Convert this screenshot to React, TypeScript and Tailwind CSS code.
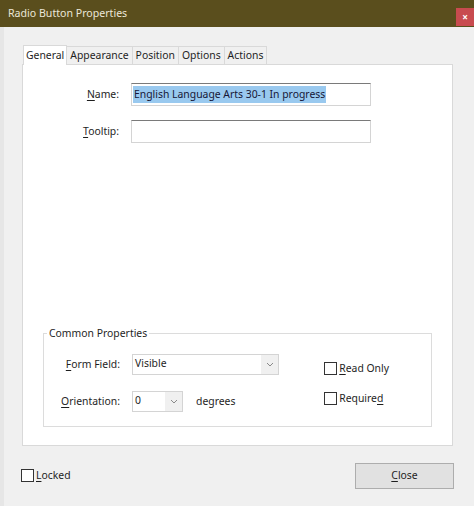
import React from "react";

const font = { fontFamily: '"Noto Sans", "Open Sans", sans-serif' };

function Key({ children }: { children: React.ReactNode }) {
  return <span className="underline underline-offset-2">{children}</span>;
}

function Chevron() {
  return (
    <svg width="8" height="5" viewBox="0 0 8 5" fill="none">
      <path d="M1 1L4 4L7 1" stroke="#8a8a8a" strokeWidth="1" />
    </svg>
  );
}

function Check({ label }: { label: React.ReactNode }) {
  return (
    <label className="flex items-center gap-[2px] text-[#1e1e1e]">
      <span className="w-[13px] h-[13px] border border-[#333] bg-white" />
      <span>{label}</span>
    </label>
  );
}

export default function App() {
  const tabs = ["Appearance", "Position", "Options", "Actions"];

  return (
    <div
      className="w-[474px] h-[506px] bg-[#f0f0f0] flex flex-col text-[10.4px] text-[#1e1e1e] overflow-hidden"
      style={font}
    >
      {/* title bar */}
      <div className="h-[27px] bg-[#5a4e1d] flex justify-between pl-[8px]">
        <span className="self-center text-[#ebe7d9] text-[10.6px]">Radio Button Properties</span>
        <button className="self-end w-[18px] h-[18px] mb-[1px] bg-[#c84b4f] text-white text-[10px] font-bold flex items-center justify-center">
          ×
        </button>
      </div>

      <div className="flex-1 flex flex-col border-l-[4px] border-[#e6e6e6]">
        {/* tabs */}
        <div className="mt-[18px] ml-[18px] flex items-end h-[19px]">
          <div className="h-[20px] px-[2px] bg-white border border-b-0 border-[#d9d9d9] ml-[1px] flex items-center relative top-[1px] z-10">
            General
          </div>
          {tabs.map((t) => (
            <div
              key={t}
              className="h-[18px] px-[3px] bg-[#f0f0f0] border border-l-0 border-b-0 border-[#d9d9d9] flex items-center"
            >
              {t}
            </div>
          ))}
        </div>

        {/* panel */}
        <div className="ml-[18px] w-[431px] h-[382px] bg-white border border-[#d9d9d9] flex flex-col">
          <div className="mt-[18px] flex items-center">
            <span className="w-[96px] text-right">
              <Key>N</Key>ame:
            </span>
            <div className="ml-[12px] w-[240px] h-[23px] border border-[#d4d4d4] border-t-[#7a7a7a] flex items-center px-[1px]">
              <span className="bg-[#99c9ef] text-[#161636] leading-[17px] px-[1px]">
                English Language Arts 30-1 In progress
              </span>
            </div>
          </div>
          <div className="mt-[14px] flex items-center">
            <span className="w-[96px] text-right">
              <Key>T</Key>ooltip:
            </span>
            <div className="ml-[12px] w-[240px] h-[23px] border border-[#d4d4d4] border-t-[#7a7a7a]" />
          </div>

          <fieldset className="mt-auto mb-[18px] ml-[20px] w-[389px] h-[101px] border border-[#dcdcdc] flex">
            <legend className="ml-[3px] px-[2px] leading-[14px]">Common Properties</legend>
            <div className="flex flex-col">
              <div className="mt-[14px] flex items-center">
                <span className="w-[76px] text-right">
                  <Key>F</Key>orm Field:
                </span>
                <div className="ml-[12px] w-[147px] h-[21px] border border-[#d4d4d4] flex">
                  <span className="flex-1 bg-white pl-[2px] leading-[17px]">Visible</span>
                  <span className="w-[17px] bg-[#f0f0f0] flex items-center justify-center">
                    <Chevron />
                  </span>
                </div>
              </div>
              <div className="mt-[16px] flex items-center">
                <span className="w-[76px] text-right">
                  <Key>O</Key>rientation:
                </span>
                <div className="ml-[12px] w-[51px] h-[21px] border border-[#d4d4d4] flex">
                  <span className="flex-1 bg-white pl-[2px] leading-[17px]">0</span>
                  <span className="w-[17px] bg-[#f0f0f0] flex items-center justify-center">
                    <Chevron />
                  </span>
                </div>
                <span className="ml-[13px]">degrees</span>
              </div>
            </div>
            <div className="ml-auto mr-[42px] flex flex-col">
              <div className="mt-[21px]">
                <Check
                  label={
                    <>
                      <Key>R</Key>ead Only
                    </>
                  }
                />
              </div>
              <div className="mt-[14px]">
                <Check
                  label={
                    <>
                      Require<Key>d</Key>
                    </>
                  }
                />
              </div>
            </div>
          </fieldset>
        </div>

        {/* footer */}
        <div className="flex items-center justify-between pl-[17px] pr-[20px] mt-[17px]">
          <Check
            label={
              <>
                <Key>L</Key>ocked
              </>
            }
          />
          <button className="w-[99px] h-[26px] bg-[#e1e1e1] border border-[#adadad]">
            <Key>C</Key>lose
          </button>
        </div>
      </div>
    </div>
  );
}
